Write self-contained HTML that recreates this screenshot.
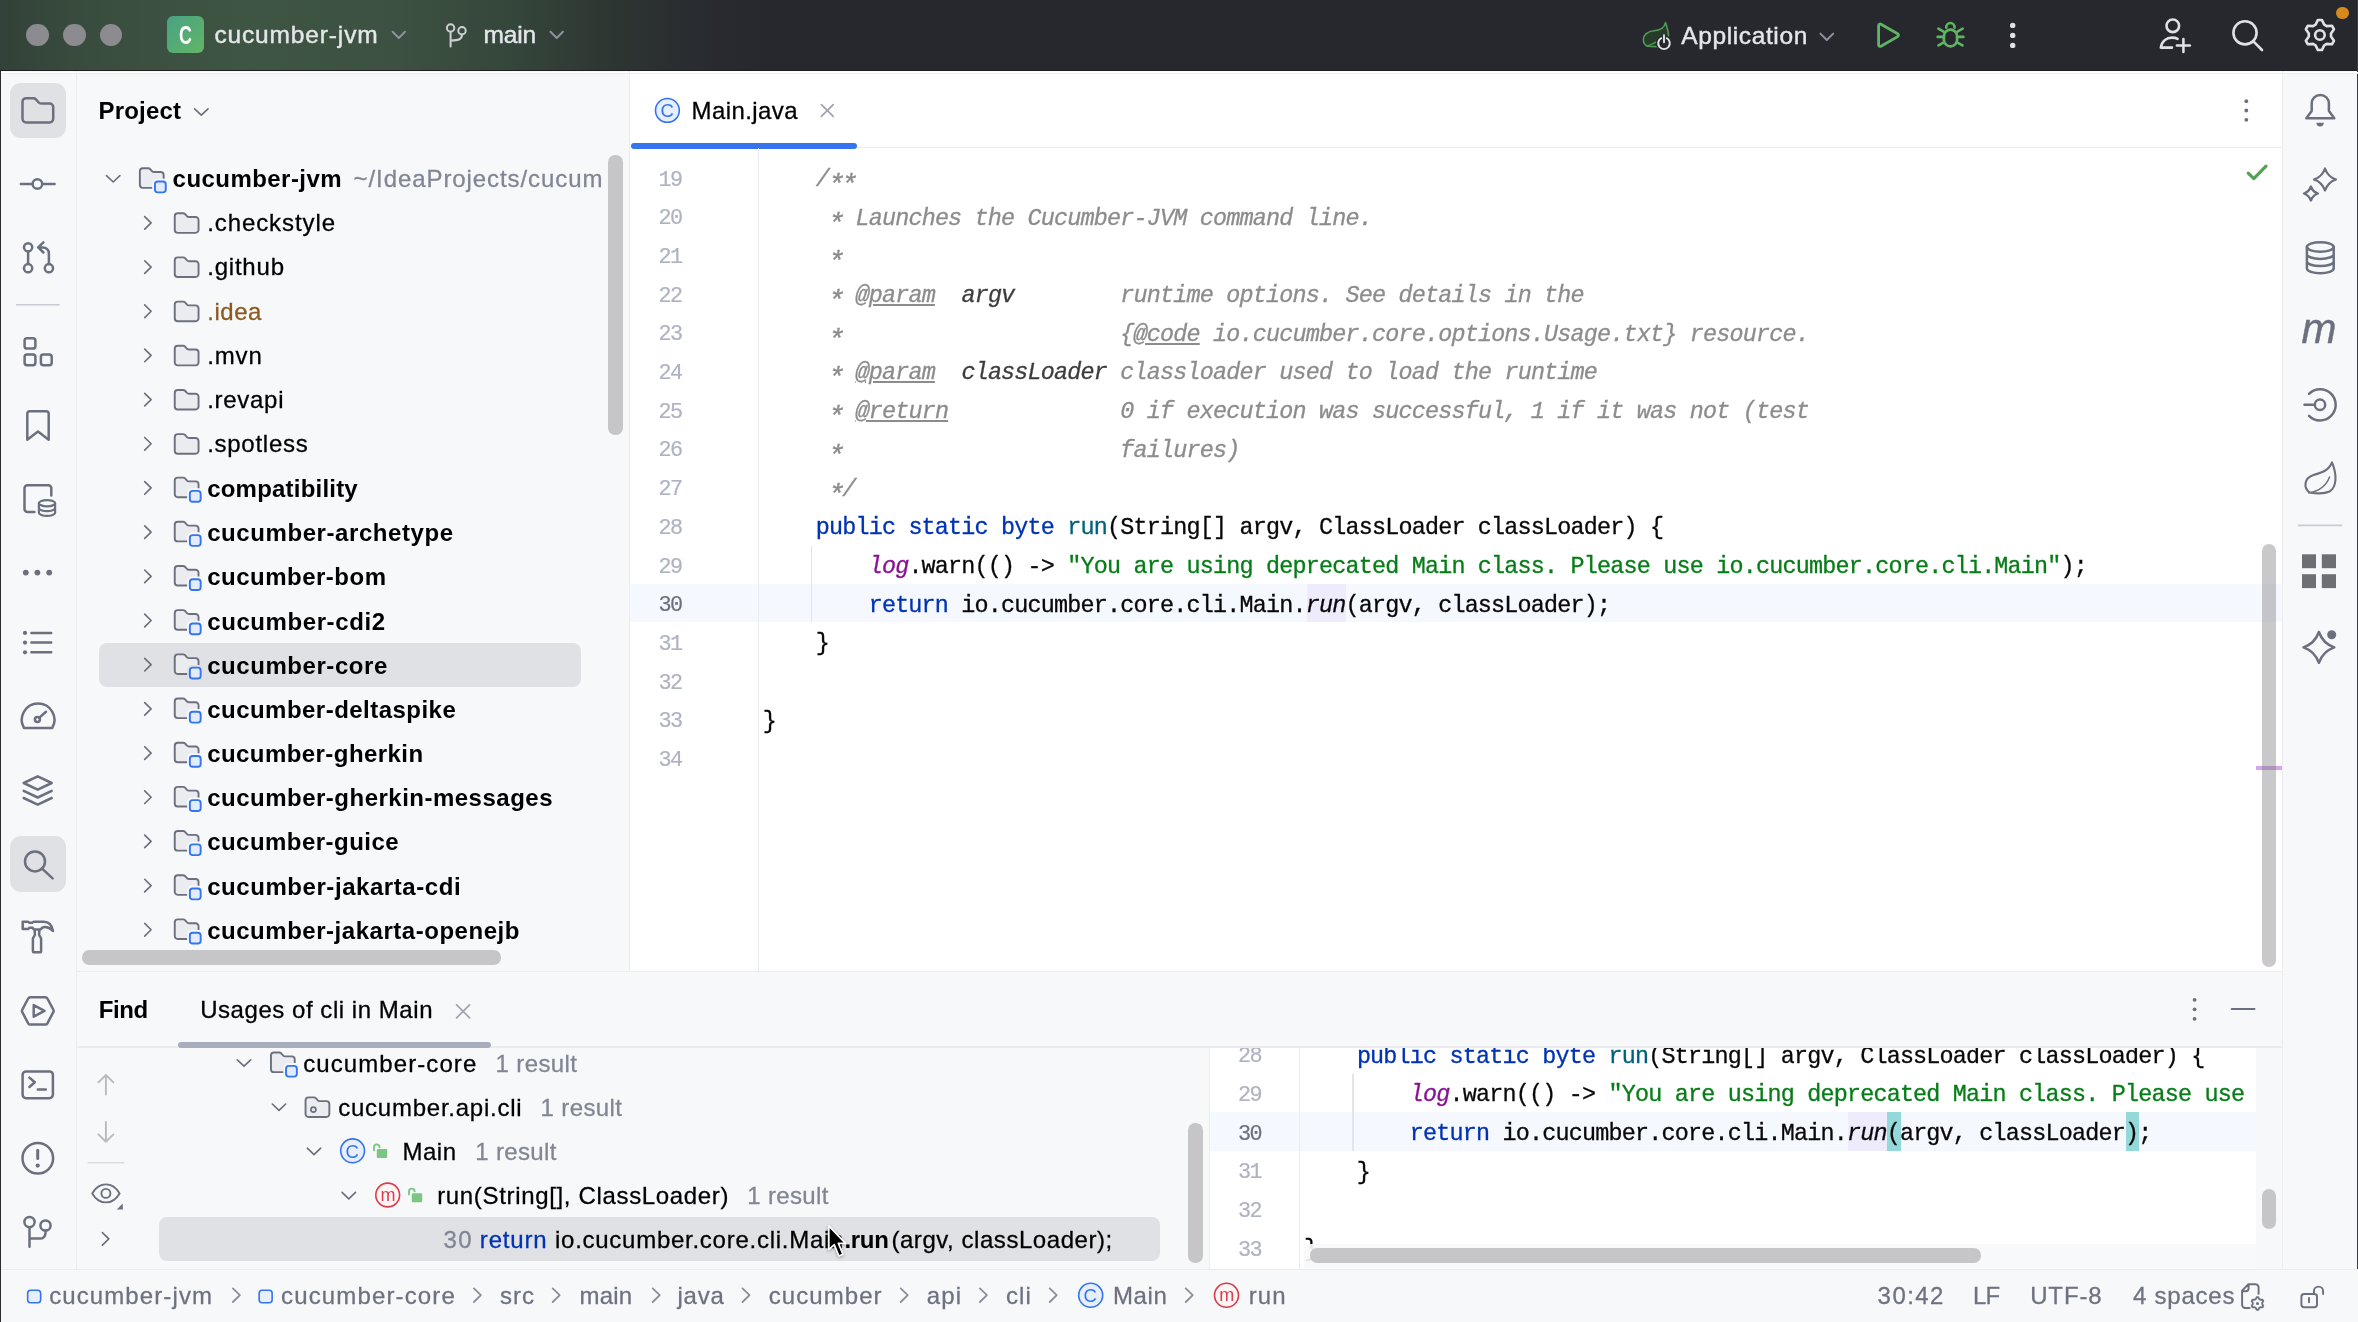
<!DOCTYPE html>
<html lang="en"><head><meta charset="utf-8"><title>cucumber-jvm – Main.java</title>
<style>
html,body{margin:0;padding:0;background:#F7F8FA;}
body{width:2358px;height:1322px;overflow:hidden;font-family:"Liberation Sans",sans-serif;-webkit-font-smoothing:antialiased;}
#app{will-change:transform;position:relative;width:2358px;height:1322px;overflow:hidden;background:#F7F8FA;}
.abs,.t,.ic,.bx{position:absolute;}
.t{white-space:pre;color:#000;font-family:"Liberation Sans",sans-serif;}
.t{-webkit-text-stroke:.28px;}
.b{font-weight:bold;-webkit-text-stroke:0;}
.ic{overflow:visible;display:block;}
.mono{font-family:"Liberation Mono",monospace;}
.g{color:#818594;}
.w{color:#DFE1E5;}
.sb{color:#6C707E;}
/* code colours */
.kw{color:#0033B3;}
.str{color:#067D17;}
.cm{color:#8C8C8C;font-style:italic;}
.tag{color:#8C8C8C;font-style:italic;text-decoration:underline;}
.pv{color:#3D3D3D;font-style:italic;}
.fn{color:#00627A;}
.sf{color:#871094;font-style:italic;}
.it{font-style:italic;}
.as{display:inline-block;transform:translateY(5.5px) scale(1.2);}
.ln{color:#AEB3C2;}
.lnc{color:#6C707E;}
.code{position:absolute;white-space:pre;font-family:"Liberation Mono",monospace;font-size:23.4px;letter-spacing:-0.793px;line-height:38.7px;height:38.7px;color:#080808;-webkit-text-stroke:.3px;}
.lnum{position:absolute;white-space:pre;font-family:"Liberation Mono",monospace;font-size:21.8px;letter-spacing:-1.5px;line-height:38.7px;height:38.7px;text-align:right;-webkit-text-stroke:.2px;}
.stroke{fill:none;stroke:#6C707E;stroke-width:2.5;stroke-linecap:round;stroke-linejoin:round;}
</style>
</head>
<body>
<div id="app">
<div class="bx" style="left:0;top:0;width:2358px;height:71px;background:#27282E;"></div>
<div class="bx" style="left:0;top:0;width:900px;height:70px;background:linear-gradient(90deg,#324139 0px,#394D3E 90px,#3F5543 250px,#3C5141 400px,#35463B 510px,#2D3632 610px,#292C30 690px,#27282E 760px);"></div>
<div class="bx" style="left:0;top:70px;width:2358px;height:1.500px;background:#1E1F22;"></div>
<div class="bx" style="left:26.400000000000002px;top:23.7px;width:22.4px;height:22.4px;border-radius:50%;background:#8B8B90;"></div>
<div class="bx" style="left:63.3px;top:23.7px;width:22.4px;height:22.4px;border-radius:50%;background:#8B8B90;"></div>
<div class="bx" style="left:100.1px;top:23.7px;width:22.4px;height:22.4px;border-radius:50%;background:#8B8B90;"></div>
<div class="bx" style="left:166.7px;top:16px;width:37px;height:37px;border-radius:6px;background:linear-gradient(135deg,#49A282 0%,#55AB74 50%,#63B565 100%);"></div>
<span class="t b" style="left:178.6px;top:20.16px;font-size:25.5px;line-height:30px;color:#fff;transform:scaleX(.70);transform-origin:0 0;">C</span>
<span class="t " style="left:214.4px;top:20.41px;font-size:24.5px;line-height:30px;color:#E4E6EA;-webkit-text-stroke:.45px;letter-spacing:0.860px;">cucumber-jvm</span>
<svg class="ic" style="left:388px;top:26px" width="22" height="18" viewBox="388 26 22 18" ><path d="M392.6 31.8l6.2 6.2 6.2-6.2" fill="none" stroke="#8E919E" stroke-width="2" stroke-linecap="round" stroke-linejoin="round"/></svg>
<svg class="ic" style="left:444px;top:20px" width="26" height="30" viewBox="444 20 26 30" ><g fill="none" stroke="#CED0D6" stroke-width="2" stroke-linecap="round" stroke-linejoin="round"><circle cx="450.6" cy="28" r="3.7"/><circle cx="462" cy="30.8" r="3.7"/><path d="M450.6 31.8V46.6M462 34.6c0 4.6-3 5.8-11.4 6"/></g></svg>
<span class="t " style="left:483.6px;top:20.41px;font-size:24.5px;line-height:30px;color:#E4E6EA;-webkit-text-stroke:.45px;letter-spacing:-0.203px;">main</span>
<svg class="ic" style="left:546px;top:26px" width="22" height="18" viewBox="546 26 22 18" ><path d="M550.5 31.8l6.2 6.2 6.2-6.2" fill="none" stroke="#8E919E" stroke-width="2" stroke-linecap="round" stroke-linejoin="round"/></svg>
<svg class="ic" style="left:1640px;top:18px" width="36" height="36" viewBox="1640 18 36 36" ><path d="M1665.500 22.600C1664.500 27.500 1660 30.300 1654 30.800C1647.500 31.300 1643.400 35 1643.400 39.500C1643.400 42.500 1645 45 1647.200 46.200L1658 46.800C1664 46 1668 41 1668.500 35.600C1668.300 31.500 1667 27 1665.500 22.600Z" fill="#263B2A" stroke="#509A56" stroke-width="1.600" stroke-linejoin="round"/><path d="M1647.200 46.200C1650.500 44.500 1653.500 43.300 1656.500 42" fill="none" stroke="#509A56" stroke-width="1.400" stroke-linecap="round"/>
<circle cx="1664" cy="43.300" r="8.200" fill="#27282E"/><path d="M1661.300 38.200a5.800 5.800 0 1 0 5.400 0M1664 35.200v7" fill="none" stroke="#E4E6EA" stroke-width="1.900" stroke-linecap="round"/></svg>
<span class="t " style="left:1681.2px;top:21.21px;font-size:24.5px;line-height:30px;color:#E4E6EA;-webkit-text-stroke:.45px;letter-spacing:0.624px;">Application</span>
<svg class="ic" style="left:1815px;top:28px" width="24" height="18" viewBox="1815 28 24 18" ><path d="M1820.4 33.6l6.4 6.4 6.4-6.4" fill="none" stroke="#8E919E" stroke-width="2" stroke-linecap="round" stroke-linejoin="round"/></svg>
<svg class="ic" style="left:1874px;top:20px" width="30" height="30" viewBox="1874 20 30 30" ><path d="M1878.6 25.6v19.2a1.6 1.6 0 0 0 2.4 1.4l16.6-9.6a1.6 1.6 0 0 0 0-2.8l-16.6-9.6a1.6 1.6 0 0 0-2.4 1.4z" fill="none" stroke="#5FB563" stroke-width="2.800" stroke-linejoin="round"/></svg>
<svg class="ic" style="left:1934px;top:18px" width="32" height="32" viewBox="1934 18 32 32" ><g fill="none" stroke="#5FB563" stroke-width="2.700" stroke-linecap="round" stroke-linejoin="round">
<path d="M1943.900 36.300a6.600 6.600 0 0 1 13.200 0v3.400a6.600 6.600 0 0 1-13.200 0z"/>
<path d="M1946.200 27.600a4.200 4.600 0 0 1 8.400 0"/>
<path d="M1943.600 31.600l-5.200-3M1943.900 36.900h-6.200M1943.900 42.400l-5.400 3M1957.400 31.600l5.200-3M1957.100 36.900h6.200M1957.100 42.400l5.400 3"/></g></svg>
<svg class="ic" style="left:2006px;top:20px" width="14" height="32" viewBox="2006 20 14 32" ><g fill="#DFE1E5"><circle cx="2012.7" cy="25.4" r="2.7"/><circle cx="2012.7" cy="35.4" r="2.7"/><circle cx="2012.7" cy="45.4" r="2.7"/></g></svg>
<svg class="ic" style="left:2156px;top:14px" width="40" height="42" viewBox="2156 14 40 42" ><g fill="none" stroke="#DFE1E5" stroke-width="2.6" stroke-linecap="round" stroke-linejoin="round">
<circle cx="2172.800" cy="25.800" r="6.300"/><path d="M2172 47.600h-11.200c1-6.400 5.600-10 11.400-10 2.200 0 4 .4 5.400 1.200"/><path d="M2183.400 39v13M2176.900 45.500h13"/></g></svg>
<svg class="ic" style="left:2228px;top:16px" width="38" height="40" viewBox="2228 16 38 40" ><g fill="none" stroke="#DFE1E5" stroke-width="2.6" stroke-linecap="round"><circle cx="2245" cy="32.800" r="11.600"/><path d="M2253.400 41.400l8.600 8.600"/></g></svg>
<svg class="ic" style="left:2300px;top:16px" width="40" height="40" viewBox="2300 16 40 40" ><g fill="none" stroke="#DFE1E5" stroke-width="2.6" stroke-linejoin="round"><path d="M2317.92 19.93L2321.88 19.93L2324.19 24.65L2326.72 26.11L2331.96 25.75L2333.94 29.18L2331.00 33.54L2331.00 36.46L2333.94 40.82L2331.96 44.25L2326.72 43.89L2324.19 45.35L2321.88 50.07L2317.92 50.07L2315.61 45.35L2313.08 43.89L2307.84 44.25L2305.86 40.82L2308.80 36.46L2308.80 33.54L2305.86 29.18L2307.84 25.75L2313.08 26.11L2315.61 24.65Z"/><circle cx="2319.9" cy="35.0" r="4.800"/></g></svg>
<div class="bx" style="left:2336px;top:6.600px;width:12.600px;height:12.600px;border-radius:50%;background:#D68A1C;"></div>
<div class="bx" style="left:0;top:71px;width:76px;height:1198px;background:#F7F8FA;border-right:1px solid #EBECF0;"></div>
<div class="bx" style="left:10px;top:82.500px;width:56px;height:55.500px;border-radius:11px;background:#DFE1E5;"></div>
<div class="bx" style="left:10px;top:836px;width:55.500px;height:55.500px;border-radius:11px;background:#DFE1E5;"></div>
<svg class="ic" style="left:0px;top:71px" width="76" height="1198" viewBox="0 71 76 1198" ><g style="stroke-width:2.500"><path class="stroke" d="M22.500 101.800a3.600 3.600 0 0 1 3.600-3.600h7.400a3 3 0 0 1 2.200 1l3 3.300a3 3 0 0 0 2.200 1h8.700a3.600 3.600 0 0 1 3.600 3.600v11.700a3.600 3.600 0 0 1-3.600 3.600h-23.500a3.600 3.600 0 0 1-3.600-3.600z" /><path class="stroke" d="M20.900 184h11.600M42.200 184h12.400" /><circle class="stroke" cx="37.400" cy="184" r="4.800"/><circle class="stroke" cx="28.100" cy="247.300" r="4.100"/><circle class="stroke" cx="28.100" cy="268.200" r="4.100"/><circle class="stroke" cx="48.900" cy="268.200" r="4.100"/><path class="stroke" d="M28.100 251.600v12.400M48.900 264v-10.600a6 6 0 0 0-6-6h-4.400M43.400 242.300l-5.200 5.100 5.200 5.100" /><path d="M16 304.700h43.600" stroke="#C9CCD6" stroke-width="1.600" fill="none"/><rect class="stroke" x="24.600" y="338.200" width="10.800" height="10.400" rx="2.400"/><rect class="stroke" x="24.600" y="354.600" width="10.800" height="10.600" rx="2.400"/><rect class="stroke" x="40.900" y="354.600" width="10.800" height="10.600" rx="2.400"/><path class="stroke" d="M27.300 413.800a2.600 2.600 0 0 1 2.600-2.600h16.200a2.600 2.600 0 0 1 2.600 2.600v26l-10.700-8.200-10.700 8.200z" /><path class="stroke" d="M34.400 511.900h-6.900a3 3 0 0 1-3-3v-20.600a3 3 0 0 1 3-3h20.800a3 3 0 0 1 3 3v7.300" /><ellipse class="stroke" cx="47" cy="503.200" rx="8.100" ry="3.100" style="stroke-width:2.200"/><path class="stroke" d="M38.900 503.200v9.600c0 1.700 3.600 3.100 8.100 3.100s8.100-1.400 8.100-3.100v-9.600M38.900 508c0 1.700 3.600 3.100 8.100 3.100s8.100-1.400 8.100-3.100" style="stroke-width:2.200"/><g fill="#6C707E"><circle cx="25.800" cy="572.600" r="2.900"/><circle cx="37.400" cy="572.600" r="2.900"/><circle cx="49.200" cy="572.600" r="2.900"/></g><g fill="#6C707E"><circle cx="25" cy="632.900" r="2.100"/><circle cx="25" cy="642.600" r="2.100"/><circle cx="25" cy="652.300" r="2.100"/></g><path class="stroke" d="M31.400 632.900h19.800M31.400 642.600h19.800M31.400 652.300h19.800" /><path class="stroke" d="M23.900 727.900a16.300 16.300 0 1 1 28.400 0z" /><circle class="stroke" cx="37.400" cy="719.600" r="2.500"/><path class="stroke" d="M39.400 717.600l6.600-5.800" /><path class="stroke" d="M37.700 776.300l14 6.700-14 6.700-14-6.700zM23.700 790.800l14 6.700 14-6.700M23.700 798l14 6.700 14-6.700" /><circle class="stroke" cx="35" cy="861.400" r="10"/><path class="stroke" d="M42.400 868.800l10.200 9.600" /><path class="stroke" d="M22.700 921.800H28l1.400.9h2.800l1.500-.9H43.800C48.800 921.800 52 925.600 53 930.900C50.600 928.400 48 927 44.900 927C43 927 41.600 927.800 40.600 929.400H33.800l-1.500-1.700h-2.800l-1.400 1.400H22.700ZM34.600 929.600l.3 4.900c0 1.600-2 2.600-2 4.600V951a1.300 1.300 0 0 0 1.300 1.300h5.600a1.300 1.300 0 0 0 1.300-1.300V939.100c0-2-2-3-2-4.600l.3-4.900" /><path class="stroke" d="M30.400 997.200h14.800a2.600 2.600 0 0 1 2.200 1.300l5.900 11.100a2.600 2.600 0 0 1 0 2.600l-5.900 11.100a2.600 2.600 0 0 1-2.200 1.300h-14.800a2.600 2.600 0 0 1-2.200-1.300l-5.900-11.100a2.600 2.600 0 0 1 0-2.600l5.900-11.100a2.600 2.600 0 0 1 2.200-1.300zM33.700 1005.100v11.600l10.800-5.800z" /><rect class="stroke" x="22.600" y="1071.400" width="30.300" height="26.800" rx="3.400"/><path class="stroke" d="M29.400 1077.600l5.400 4.700-5.400 4.700M37.800 1089.500h8" /><circle class="stroke" cx="37.800" cy="1158.200" r="15.300"/><path class="stroke" d="M37.700 1150.200v8.200" style="stroke-width:3"/><circle cx="37.700" cy="1165.600" r="2.100" fill="#6C707E"/><circle class="stroke" cx="29.500" cy="1222.100" r="5.100"/><circle class="stroke" cx="45.500" cy="1225.500" r="5.100"/><path class="stroke" d="M29.500 1227.400v19.400M45.500 1230.800v2.400a5.400 5.400 0 0 1-5.400 5.400h-10" /></g></svg>
<div class="bx" style="left:77px;top:71px;width:552px;height:900px;background:#F7F8FA;border-right:1px solid #EBECF0;overflow:hidden;"></div>
<span class="t b" style="left:98.6px;top:95.88px;font-size:24px;line-height:30px;letter-spacing:0.171px;">Project</span>
<div class="bx" style="left:98.500px;top:643.3px;width:482px;height:43.400px;border-radius:8px;background:#DFE1E5;"></div>
<span class="t b" style="left:172.6px;top:164.08px;font-size:24px;line-height:30px;letter-spacing:0.449px;">cucumber-jvm</span>
<span class="t g" style="left:353.6px;top:164.08px;font-size:24px;line-height:30px;letter-spacing:0.913px;">~/IdeaProjects/cucum</span>
<span class="t " style="left:207.2px;top:208.26px;font-size:24px;line-height:30px;color:#000;letter-spacing:0.908px;">.checkstyle</span>
<span class="t " style="left:207.2px;top:252.44px;font-size:24px;line-height:30px;color:#000;letter-spacing:0.790px;">.github</span>
<span class="t " style="left:207.2px;top:296.62px;font-size:24px;line-height:30px;color:#8C5A1E;letter-spacing:0.538px;">.idea</span>
<span class="t " style="left:207.2px;top:340.80px;font-size:24px;line-height:30px;color:#000;letter-spacing:0.861px;">.mvn</span>
<span class="t " style="left:207.2px;top:384.98px;font-size:24px;line-height:30px;color:#000;letter-spacing:0.709px;">.revapi</span>
<span class="t " style="left:207.2px;top:429.16px;font-size:24px;line-height:30px;color:#000;letter-spacing:0.723px;">.spotless</span>
<span class="t b" style="left:207.2px;top:474.04px;font-size:24px;line-height:30px;color:#000;letter-spacing:0.206px;">compatibility</span>
<span class="t b" style="left:207.2px;top:518.22px;font-size:24px;line-height:30px;color:#000;letter-spacing:0.577px;">cucumber-archetype</span>
<span class="t b" style="left:207.2px;top:562.40px;font-size:24px;line-height:30px;color:#000;letter-spacing:0.495px;">cucumber-bom</span>
<span class="t b" style="left:207.2px;top:606.58px;font-size:24px;line-height:30px;color:#000;letter-spacing:0.590px;">cucumber-cdi2</span>
<span class="t b" style="left:207.2px;top:650.76px;font-size:24px;line-height:30px;color:#000;letter-spacing:0.559px;">cucumber-core</span>
<span class="t b" style="left:207.2px;top:694.94px;font-size:24px;line-height:30px;color:#000;letter-spacing:0.473px;">cucumber-deltaspike</span>
<span class="t b" style="left:207.2px;top:739.12px;font-size:24px;line-height:30px;color:#000;letter-spacing:0.434px;">cucumber-gherkin</span>
<span class="t b" style="left:207.2px;top:783.30px;font-size:24px;line-height:30px;color:#000;letter-spacing:0.493px;">cucumber-gherkin-messages</span>
<span class="t b" style="left:207.2px;top:827.48px;font-size:24px;line-height:30px;color:#000;letter-spacing:0.462px;">cucumber-guice</span>
<span class="t b" style="left:207.2px;top:871.66px;font-size:24px;line-height:30px;color:#000;letter-spacing:0.560px;">cucumber-jakarta-cdi</span>
<span class="t b" style="left:207.2px;top:915.84px;font-size:24px;line-height:30px;color:#000;letter-spacing:0.526px;">cucumber-jakarta-openejb</span>
<svg class="ic" style="left:77px;top:71px" width="552" height="900" viewBox="77 71 552 900" ><path d="M194.60 108.80l6.700 6.400 6.700-6.400" fill="none" stroke="#6C707E" stroke-width="1.650" stroke-linecap="round" stroke-linejoin="round"/><path d="M106.50 175.60l6.700 6.400 6.700-6.400" fill="none" stroke="#6C707E" stroke-width="1.650" stroke-linecap="round" stroke-linejoin="round"/><path d="M139.85 171.25a3 3 0 0 1 3-3h5.400a2.600 2.600 0 0 1 1.900.8l2 2.200a2.600 2.600 0 0 0 1.900.8h6.600a3 3 0 0 1 3 3v9.800a3 3 0 0 1-3 3h-17.800a3 3 0 0 1-3-3z" fill="#EBECF0" stroke="#6C707E" stroke-width="1.9" stroke-linejoin="round"/><rect x="152.20" y="178.80" width="16.300" height="16.300" rx="4.400" fill="#F7F8FA"/><rect x="154.95" y="181.55" width="10.800" height="10.800" rx="2.800" fill="#E2ECFD" stroke="#3574F0" stroke-width="1.900"/><path d="M144.70 216.58l6.400 6.300-6.400 6.300" fill="none" stroke="#6C707E" stroke-width="1.650" stroke-linecap="round" stroke-linejoin="round"/><path d="M174.75 216.23a3 3 0 0 1 3-3h5.400a2.600 2.600 0 0 1 1.900.8l2 2.200a2.600 2.600 0 0 0 1.900.8h6.600a3 3 0 0 1 3 3v9.800a3 3 0 0 1-3 3h-17.800a3 3 0 0 1-3-3z" fill="#EBECF0" stroke="#6C707E" stroke-width="1.9" stroke-linejoin="round"/><path d="M144.70 260.76l6.400 6.300-6.400 6.300" fill="none" stroke="#6C707E" stroke-width="1.650" stroke-linecap="round" stroke-linejoin="round"/><path d="M174.75 260.41a3 3 0 0 1 3-3h5.400a2.600 2.600 0 0 1 1.900.8l2 2.200a2.600 2.600 0 0 0 1.900.8h6.600a3 3 0 0 1 3 3v9.800a3 3 0 0 1-3 3h-17.800a3 3 0 0 1-3-3z" fill="#EBECF0" stroke="#6C707E" stroke-width="1.9" stroke-linejoin="round"/><path d="M144.70 304.94l6.400 6.300-6.400 6.300" fill="none" stroke="#6C707E" stroke-width="1.650" stroke-linecap="round" stroke-linejoin="round"/><path d="M174.75 304.59a3 3 0 0 1 3-3h5.400a2.600 2.600 0 0 1 1.900.8l2 2.200a2.600 2.600 0 0 0 1.900.8h6.600a3 3 0 0 1 3 3v9.800a3 3 0 0 1-3 3h-17.800a3 3 0 0 1-3-3z" fill="#EBECF0" stroke="#6C707E" stroke-width="1.9" stroke-linejoin="round"/><path d="M144.70 349.12l6.400 6.300-6.400 6.300" fill="none" stroke="#6C707E" stroke-width="1.650" stroke-linecap="round" stroke-linejoin="round"/><path d="M174.75 348.77a3 3 0 0 1 3-3h5.400a2.600 2.600 0 0 1 1.900.8l2 2.200a2.600 2.600 0 0 0 1.900.8h6.600a3 3 0 0 1 3 3v9.800a3 3 0 0 1-3 3h-17.800a3 3 0 0 1-3-3z" fill="#EBECF0" stroke="#6C707E" stroke-width="1.9" stroke-linejoin="round"/><path d="M144.70 393.30l6.400 6.300-6.400 6.300" fill="none" stroke="#6C707E" stroke-width="1.650" stroke-linecap="round" stroke-linejoin="round"/><path d="M174.75 392.95a3 3 0 0 1 3-3h5.400a2.600 2.600 0 0 1 1.900.8l2 2.200a2.600 2.600 0 0 0 1.900.8h6.600a3 3 0 0 1 3 3v9.800a3 3 0 0 1-3 3h-17.800a3 3 0 0 1-3-3z" fill="#EBECF0" stroke="#6C707E" stroke-width="1.9" stroke-linejoin="round"/><path d="M144.70 437.48l6.400 6.300-6.400 6.300" fill="none" stroke="#6C707E" stroke-width="1.650" stroke-linecap="round" stroke-linejoin="round"/><path d="M174.75 437.13a3 3 0 0 1 3-3h5.400a2.600 2.600 0 0 1 1.900.8l2 2.200a2.600 2.600 0 0 0 1.900.8h6.600a3 3 0 0 1 3 3v9.800a3 3 0 0 1-3 3h-17.800a3 3 0 0 1-3-3z" fill="#EBECF0" stroke="#6C707E" stroke-width="1.9" stroke-linejoin="round"/><path d="M144.70 481.66l6.400 6.300-6.400 6.300" fill="none" stroke="#6C707E" stroke-width="1.650" stroke-linecap="round" stroke-linejoin="round"/><path d="M174.75 480.61a3 3 0 0 1 3-3h5.400a2.600 2.600 0 0 1 1.900.8l2 2.200a2.600 2.600 0 0 0 1.900.8h6.600a3 3 0 0 1 3 3v9.800a3 3 0 0 1-3 3h-17.800a3 3 0 0 1-3-3z" fill="#EBECF0" stroke="#6C707E" stroke-width="1.9" stroke-linejoin="round"/><rect x="187.10" y="488.16" width="16.300" height="16.300" rx="4.400" fill="#F7F8FA"/><rect x="189.85" y="490.91" width="10.800" height="10.800" rx="2.800" fill="#E2ECFD" stroke="#3574F0" stroke-width="1.900"/><path d="M144.70 525.84l6.400 6.300-6.400 6.300" fill="none" stroke="#6C707E" stroke-width="1.650" stroke-linecap="round" stroke-linejoin="round"/><path d="M174.75 524.79a3 3 0 0 1 3-3h5.400a2.600 2.600 0 0 1 1.900.8l2 2.200a2.600 2.600 0 0 0 1.900.8h6.600a3 3 0 0 1 3 3v9.800a3 3 0 0 1-3 3h-17.800a3 3 0 0 1-3-3z" fill="#EBECF0" stroke="#6C707E" stroke-width="1.9" stroke-linejoin="round"/><rect x="187.10" y="532.34" width="16.300" height="16.300" rx="4.400" fill="#F7F8FA"/><rect x="189.85" y="535.09" width="10.800" height="10.800" rx="2.800" fill="#E2ECFD" stroke="#3574F0" stroke-width="1.900"/><path d="M144.70 570.02l6.400 6.300-6.400 6.300" fill="none" stroke="#6C707E" stroke-width="1.650" stroke-linecap="round" stroke-linejoin="round"/><path d="M174.75 568.97a3 3 0 0 1 3-3h5.400a2.600 2.600 0 0 1 1.900.8l2 2.200a2.600 2.600 0 0 0 1.900.8h6.600a3 3 0 0 1 3 3v9.800a3 3 0 0 1-3 3h-17.800a3 3 0 0 1-3-3z" fill="#EBECF0" stroke="#6C707E" stroke-width="1.9" stroke-linejoin="round"/><rect x="187.10" y="576.52" width="16.300" height="16.300" rx="4.400" fill="#F7F8FA"/><rect x="189.85" y="579.27" width="10.800" height="10.800" rx="2.800" fill="#E2ECFD" stroke="#3574F0" stroke-width="1.900"/><path d="M144.70 614.20l6.400 6.300-6.400 6.300" fill="none" stroke="#6C707E" stroke-width="1.650" stroke-linecap="round" stroke-linejoin="round"/><path d="M174.75 613.15a3 3 0 0 1 3-3h5.400a2.600 2.600 0 0 1 1.900.8l2 2.200a2.600 2.600 0 0 0 1.900.8h6.600a3 3 0 0 1 3 3v9.800a3 3 0 0 1-3 3h-17.800a3 3 0 0 1-3-3z" fill="#EBECF0" stroke="#6C707E" stroke-width="1.9" stroke-linejoin="round"/><rect x="187.10" y="620.70" width="16.300" height="16.300" rx="4.400" fill="#F7F8FA"/><rect x="189.85" y="623.45" width="10.800" height="10.800" rx="2.800" fill="#E2ECFD" stroke="#3574F0" stroke-width="1.900"/><path d="M144.70 658.38l6.400 6.300-6.400 6.300" fill="none" stroke="#6C707E" stroke-width="1.650" stroke-linecap="round" stroke-linejoin="round"/><path d="M174.75 657.33a3 3 0 0 1 3-3h5.400a2.600 2.600 0 0 1 1.900.8l2 2.200a2.600 2.600 0 0 0 1.900.8h6.600a3 3 0 0 1 3 3v9.800a3 3 0 0 1-3 3h-17.800a3 3 0 0 1-3-3z" fill="#EBECF0" stroke="#6C707E" stroke-width="1.9" stroke-linejoin="round"/><rect x="187.10" y="664.88" width="16.300" height="16.300" rx="4.400" fill="#DFE1E5"/><rect x="189.85" y="667.63" width="10.800" height="10.800" rx="2.800" fill="#E2ECFD" stroke="#3574F0" stroke-width="1.900"/><path d="M144.70 702.56l6.400 6.300-6.400 6.300" fill="none" stroke="#6C707E" stroke-width="1.650" stroke-linecap="round" stroke-linejoin="round"/><path d="M174.75 701.51a3 3 0 0 1 3-3h5.400a2.600 2.600 0 0 1 1.900.8l2 2.200a2.600 2.600 0 0 0 1.900.8h6.600a3 3 0 0 1 3 3v9.800a3 3 0 0 1-3 3h-17.800a3 3 0 0 1-3-3z" fill="#EBECF0" stroke="#6C707E" stroke-width="1.9" stroke-linejoin="round"/><rect x="187.10" y="709.06" width="16.300" height="16.300" rx="4.400" fill="#F7F8FA"/><rect x="189.85" y="711.81" width="10.800" height="10.800" rx="2.800" fill="#E2ECFD" stroke="#3574F0" stroke-width="1.900"/><path d="M144.70 746.74l6.400 6.300-6.400 6.300" fill="none" stroke="#6C707E" stroke-width="1.650" stroke-linecap="round" stroke-linejoin="round"/><path d="M174.75 745.69a3 3 0 0 1 3-3h5.400a2.600 2.600 0 0 1 1.900.8l2 2.200a2.600 2.600 0 0 0 1.900.8h6.600a3 3 0 0 1 3 3v9.800a3 3 0 0 1-3 3h-17.800a3 3 0 0 1-3-3z" fill="#EBECF0" stroke="#6C707E" stroke-width="1.9" stroke-linejoin="round"/><rect x="187.10" y="753.24" width="16.300" height="16.300" rx="4.400" fill="#F7F8FA"/><rect x="189.85" y="755.99" width="10.800" height="10.800" rx="2.800" fill="#E2ECFD" stroke="#3574F0" stroke-width="1.900"/><path d="M144.70 790.92l6.400 6.300-6.400 6.300" fill="none" stroke="#6C707E" stroke-width="1.650" stroke-linecap="round" stroke-linejoin="round"/><path d="M174.75 789.87a3 3 0 0 1 3-3h5.400a2.600 2.600 0 0 1 1.900.8l2 2.200a2.600 2.600 0 0 0 1.900.8h6.600a3 3 0 0 1 3 3v9.800a3 3 0 0 1-3 3h-17.800a3 3 0 0 1-3-3z" fill="#EBECF0" stroke="#6C707E" stroke-width="1.9" stroke-linejoin="round"/><rect x="187.10" y="797.42" width="16.300" height="16.300" rx="4.400" fill="#F7F8FA"/><rect x="189.85" y="800.17" width="10.800" height="10.800" rx="2.800" fill="#E2ECFD" stroke="#3574F0" stroke-width="1.900"/><path d="M144.70 835.10l6.400 6.300-6.400 6.300" fill="none" stroke="#6C707E" stroke-width="1.650" stroke-linecap="round" stroke-linejoin="round"/><path d="M174.75 834.05a3 3 0 0 1 3-3h5.400a2.600 2.600 0 0 1 1.900.8l2 2.200a2.600 2.600 0 0 0 1.900.8h6.600a3 3 0 0 1 3 3v9.800a3 3 0 0 1-3 3h-17.800a3 3 0 0 1-3-3z" fill="#EBECF0" stroke="#6C707E" stroke-width="1.9" stroke-linejoin="round"/><rect x="187.10" y="841.60" width="16.300" height="16.300" rx="4.400" fill="#F7F8FA"/><rect x="189.85" y="844.35" width="10.800" height="10.800" rx="2.800" fill="#E2ECFD" stroke="#3574F0" stroke-width="1.900"/><path d="M144.70 879.28l6.400 6.300-6.400 6.300" fill="none" stroke="#6C707E" stroke-width="1.650" stroke-linecap="round" stroke-linejoin="round"/><path d="M174.75 878.23a3 3 0 0 1 3-3h5.400a2.600 2.600 0 0 1 1.900.8l2 2.200a2.600 2.600 0 0 0 1.900.8h6.600a3 3 0 0 1 3 3v9.800a3 3 0 0 1-3 3h-17.800a3 3 0 0 1-3-3z" fill="#EBECF0" stroke="#6C707E" stroke-width="1.9" stroke-linejoin="round"/><rect x="187.10" y="885.78" width="16.300" height="16.300" rx="4.400" fill="#F7F8FA"/><rect x="189.85" y="888.53" width="10.800" height="10.800" rx="2.800" fill="#E2ECFD" stroke="#3574F0" stroke-width="1.900"/><path d="M144.70 923.46l6.400 6.300-6.400 6.300" fill="none" stroke="#6C707E" stroke-width="1.650" stroke-linecap="round" stroke-linejoin="round"/><path d="M174.75 922.41a3 3 0 0 1 3-3h5.400a2.600 2.600 0 0 1 1.900.8l2 2.200a2.600 2.600 0 0 0 1.900.8h6.600a3 3 0 0 1 3 3v9.800a3 3 0 0 1-3 3h-17.800a3 3 0 0 1-3-3z" fill="#EBECF0" stroke="#6C707E" stroke-width="1.9" stroke-linejoin="round"/><rect x="187.10" y="929.96" width="16.300" height="16.300" rx="4.400" fill="#F7F8FA"/><rect x="189.85" y="932.71" width="10.800" height="10.800" rx="2.800" fill="#E2ECFD" stroke="#3574F0" stroke-width="1.900"/></svg>
<div class="bx" style="left:608.400px;top:154.600px;width:14.600px;height:280px;border-radius:7.200px;background:#C6C6C8;"></div>
<div class="bx" style="left:82.400px;top:950.300px;width:419px;height:14.300px;border-radius:7.200px;background:#C6C6C8;"></div>
<div class="bx" style="left:630px;top:71px;width:1652px;height:900px;background:#fff;"></div>
<div class="bx" style="left:630px;top:146.800px;width:1652px;height:1.600px;background:#EBECF0;"></div>
<svg class="ic" style="left:652px;top:96px" width="30" height="30" viewBox="652 96 30 30" ><circle cx="667.400" cy="110.400" r="11.900" fill="#E7EFFD" stroke="#3574F0" stroke-width="1.600"/></svg>
<span class="t " style="left:660.4px;top:95.79px;font-size:18.5px;line-height:30px;color:#3574F0;-webkit-text-stroke:0;">C</span>
<span class="t " style="left:691.6px;top:96.08px;font-size:24px;line-height:30px;letter-spacing:0.398px;">Main.java</span>
<svg class="ic" style="left:816px;top:100px" width="22" height="22" viewBox="816 100 22 22" ><path d="M821.400 104.600l11.800 11.800M833.200 104.600l-11.800 11.800" fill="none" stroke="#A0A3AF" stroke-width="1.700" stroke-linecap="round"/></svg>
<div class="bx" style="left:630.500px;top:143px;width:226.500px;height:6px;border-radius:3px;background:#3574F0;"></div>
<svg class="ic" style="left:2240px;top:96px" width="14" height="30" viewBox="2240 96 14 30" ><g fill="#6C707E"><circle cx="2246.300" cy="101.200" r="1.900"/><circle cx="2246.300" cy="110.500" r="1.900"/><circle cx="2246.300" cy="119.800" r="1.900"/></g></svg>
<div class="bx" style="left:630px;top:583.800px;width:1652px;height:38.400px;background:#F5F8FE;"></div>
<div class="bx" style="left:757.700px;top:148.400px;width:1.300px;height:822.600px;background:#EBECF0;"></div>
<div class="bx" style="left:1306.7px;top:584px;width:39.8px;height:38.200px;background:#EDEBFC;"></div>
<div class="bx" style="left:811.200px;top:545.600px;width:1.300px;height:76.600px;background:#E4E5EA;"></div>
<div class="lnum ln" style="left:658.4px;top:161.55px;">19</div>
<div class="code" style="left:762.7px;top:160.95px;">    <span class="cm">/<span class="as">*</span><span class="as">*</span></span></div>
<div class="lnum ln" style="left:658.4px;top:200.25px;">20</div>
<div class="code" style="left:762.7px;top:199.65px;">    <span class="cm"> <span class="as">*</span> Launches the Cucumber-JVM command line.</span></div>
<div class="lnum ln" style="left:658.4px;top:238.95px;">21</div>
<div class="code" style="left:762.7px;top:238.35px;">    <span class="cm"> <span class="as">*</span></span></div>
<div class="lnum ln" style="left:658.4px;top:277.65px;">22</div>
<div class="code" style="left:762.7px;top:277.05px;">    <span class="cm"> <span class="as">*</span> </span><span class="tag">@param</span><span class="cm">  </span><span class="pv">argv</span><span class="cm">        runtime options. See details in the</span></div>
<div class="lnum ln" style="left:658.4px;top:316.35px;">23</div>
<div class="code" style="left:762.7px;top:315.75px;">    <span class="cm"> <span class="as">*</span>                     {</span><span class="tag">@code</span><span class="cm"> io.cucumber.core.options.Usage.txt} resource.</span></div>
<div class="lnum ln" style="left:658.4px;top:355.05px;">24</div>
<div class="code" style="left:762.7px;top:354.45px;">    <span class="cm"> <span class="as">*</span> </span><span class="tag">@param</span><span class="cm">  </span><span class="pv">classLoader</span><span class="cm"> classloader used to load the runtime</span></div>
<div class="lnum ln" style="left:658.4px;top:393.75px;">25</div>
<div class="code" style="left:762.7px;top:393.15px;">    <span class="cm"> <span class="as">*</span> </span><span class="tag">@return</span><span class="cm">             0 if execution was successful, 1 if it was not (test</span></div>
<div class="lnum ln" style="left:658.4px;top:432.45px;">26</div>
<div class="code" style="left:762.7px;top:431.85px;">    <span class="cm"> <span class="as">*</span>                     failures)</span></div>
<div class="lnum ln" style="left:658.4px;top:471.15px;">27</div>
<div class="code" style="left:762.7px;top:470.55px;">    <span class="cm"> <span class="as">*</span>/</span></div>
<div class="lnum ln" style="left:658.4px;top:509.85px;">28</div>
<div class="code" style="left:762.7px;top:509.25px;">    <span class="kw">public static byte</span> <span class="fn">run</span>(String[] argv, ClassLoader classLoader) {</div>
<div class="lnum ln" style="left:658.4px;top:548.55px;">29</div>
<div class="code" style="left:762.7px;top:547.95px;">        <span class="sf">log</span>.warn(() -&gt; <span class="str">"You are using deprecated Main class. Please use io.cucumber.core.cli.Main"</span>);</div>
<div class="lnum lnc" style="left:658.4px;top:587.25px;">30</div>
<div class="code" style="left:762.7px;top:586.65px;">        <span class="kw">return</span> io.cucumber.core.cli.Main.<span class="it">run</span>(argv, classLoader);</div>
<div class="lnum ln" style="left:658.4px;top:625.95px;">31</div>
<div class="code" style="left:762.7px;top:625.35px;">    }</div>
<div class="lnum ln" style="left:658.4px;top:664.65px;">32</div>
<div class="lnum ln" style="left:658.4px;top:703.35px;">33</div>
<div class="code" style="left:762.7px;top:702.75px;">}</div>
<div class="lnum ln" style="left:658.4px;top:742.05px;">34</div>
<svg class="ic" style="left:2242px;top:160px" width="30" height="26" viewBox="2242 160 30 26" ><path d="M2248.200 173.200l5.600 5.400 12.200-12.400" fill="none" stroke="#4FA352" stroke-width="3.200" stroke-linecap="round" stroke-linejoin="round"/></svg>
<div class="bx" style="left:2256px;top:765.800px;width:25.500px;height:3.800px;background:#D4A6EA;"></div>
<div class="bx" style="left:2261.600px;top:543.500px;width:14.300px;height:423px;border-radius:7.200px;background:rgba(120,120,125,.40);"></div>
<div class="bx" style="left:2282px;top:71px;width:76px;height:1198px;background:#F7F8FA;border-left:1px solid #EBECF0;box-sizing:border-box;"></div>
<div class="bx" style="left:2357px;top:0;width:1px;height:1322px;background:#3A3B40;"></div>
<svg class="ic" style="left:2283px;top:71px" width="75" height="700" viewBox="2283 71 75 700" ><path class="stroke" d="M2306.300 118.200l5.400-7.200v-7.500a8.600 8.600 0 0 1 17.200 0v7.500l5.400 7.200z" /><path d="M2316.400 122.800h7.400a3.700 3.700 0 0 1-7.400 0z" fill="#6C707E"/><path class="stroke" d="M2325 168.5Q2327.8 176.7 2336 179.5Q2327.8 182.3 2325 190.5Q2322.2 182.3 2314 179.5Q2322.2 176.7 2325 168.5ZM2310.9 186.5Q2312.7000000000003 191.7 2317.9 193.5Q2312.7000000000003 195.3 2310.9 200.5Q2309.1 195.3 2303.9 193.5Q2309.1 191.7 2310.9 186.5Z" style="stroke-width:2.300"/><ellipse class="stroke" cx="2320.300" cy="247" rx="13.400" ry="4.700"/><path class="stroke" d="M2306.900 247v21.600c0 2.600 6 4.700 13.400 4.700s13.400-2.100 13.400-4.700v-21.600M2306.900 254.200c0 2.600 6 4.700 13.400 4.700s13.400-2.100 13.400-4.700M2306.900 261.400c0 2.600 6 4.700 13.400 4.700s13.400-2.100 13.400-4.700" /><path class="stroke" d="M2309 393.800a15.600 15.600 0 1 1 0 22" /><circle class="stroke" cx="2320" cy="404.800" r="5.200"/><path class="stroke" d="M2304.500 404.800h10.200" /><path class="stroke" d="M2332 462.400C2337.200 475 2336.800 487 2329.500 491.500C2323 494.600 2314 493.200 2309.500 492.500C2303.300 488 2304 478 2313 475.200C2322 472.500 2329 470.500 2332 462.400z" style="stroke-width:2.100"/><path class="stroke" d="M2308.600 492.800C2318 491.500 2326 486 2329.600 477" style="stroke-width:1.500"/><path d="M2298 525.400h44.200" stroke="#C9CCD6" stroke-width="1.600" fill="none"/><g fill="#6E6F72"><rect x="2302" y="554.300" width="14" height="13.900"/><rect x="2321.800" y="554.300" width="14.200" height="13.900"/><rect x="2302" y="574.200" width="14" height="13.900"/><rect x="2321.800" y="574.200" width="14.200" height="13.900"/></g><path class="stroke" d="M2318.9 632.0Q2322.9 643.4 2334.3 647.4Q2322.9 651.4 2318.9 662.8Q2314.9 651.4 2303.5 647.4Q2314.9 643.4 2318.9 632.0Z" /><circle cx="2331.700" cy="634.800" r="4.500" fill="#6C707E"/></svg>
<svg class="ic" style="left:2296px;top:310px" width="50" height="44" viewBox="2296 310 50 44" ><text x="2301.600" y="343.200" font-family="Liberation Sans, sans-serif" font-style="italic" font-size="43" textLength="35" lengthAdjust="spacingAndGlyphs" fill="#6C707E" stroke="#6C707E" stroke-width="0.400" stroke-linejoin="round">m</text></svg>
<div class="bx" style="left:77px;top:971px;width:2205px;height:298px;background:#F7F8FA;"></div>
<div class="bx" style="left:77px;top:970.500px;width:2205px;height:1.600px;background:#EBECF0;"></div>
<div class="bx" style="left:77px;top:1046px;width:2205px;height:1.600px;background:#EBECF0;"></div>
<span class="t b" style="left:98.8px;top:994.68px;font-size:24px;line-height:30px;letter-spacing:-0.419px;">Find</span>
<span class="t " style="left:200.2px;top:994.68px;font-size:24px;line-height:30px;letter-spacing:0.543px;">Usages of cli in Main</span>
<div class="bx" style="left:177.800px;top:1042px;width:313px;height:5.800px;border-radius:3px;background:#A8ADBD;"></div>
<div class="bx" style="left:159.200px;top:1216.900px;width:1001px;height:44.200px;border-radius:8px;background:#DFE1E5;"></div>
<div class="bx" style="left:1188.200px;top:1123px;width:14.400px;height:139.800px;border-radius:7.200px;background:#C6C6C8;"></div>
<div class="bx" style="left:1208.800px;top:1047.600px;width:1072.200px;height:221px;background:#fff;border-left:1px solid #EBECF0;overflow:hidden;">
<div class="bx" style="left:-1209.800px;top:-1047.600px;width:2358px;height:1322px;">
<div class="bx" style="left:1210px;top:1112.200px;width:1046px;height:38.600px;background:#F5F8FE;"></div>
<div class="bx" style="left:1299px;top:1047px;width:1.300px;height:222px;background:#EBECF0;"></div>
<div class="bx" style="left:1847.8px;top:1112.200px;width:39.8px;height:38.600px;background:#EDEBFC;"></div>
<div class="bx" style="left:1887.0px;top:1112.200px;width:13.7px;height:38.600px;background:#93D9D9;"></div>
<div class="bx" style="left:2125.5px;top:1112.200px;width:13.7px;height:38.600px;background:#93D9D9;"></div>
<div class="bx" style="left:1352.300px;top:1073.800px;width:1.300px;height:77px;background:#E4E5EA;"></div>
<div class="lnum ln" style="left:1238.0px;top:1038.35px;">28</div>
<div class="code" style="left:1303.8999999999999px;top:1037.75px;">    <span class="kw">public static byte</span> <span class="fn">run</span>(String[] argv, ClassLoader classLoader) {</div>
<div class="lnum ln" style="left:1238.0px;top:1077.05px;">29</div>
<div class="code" style="left:1303.8999999999999px;top:1076.45px;">        <span class="sf">log</span>.warn(() -&gt; <span class="str">"You are using deprecated Main class. Please use io.cucumber.core.cli.Main"</span>);</div>
<div class="lnum lnc" style="left:1238.0px;top:1115.75px;">30</div>
<div class="code" style="left:1303.8999999999999px;top:1115.15px;">        <span class="kw">return</span> io.cucumber.core.cli.Main.<span class="it">run</span>(argv, classLoader);</div>
<div class="lnum ln" style="left:1238.0px;top:1154.45px;">31</div>
<div class="code" style="left:1303.8999999999999px;top:1153.85px;">    }</div>
<div class="lnum ln" style="left:1238.0px;top:1193.15px;">32</div>
<div class="lnum ln" style="left:1238.0px;top:1231.85px;">33</div>
<div class="code" style="left:1303.8999999999999px;top:1231.25px;">}</div>
<div class="bx" style="left:2256px;top:1047px;width:26px;height:222px;background:#F7F8FA;"></div>
<div class="bx" style="left:1304px;top:1243.600px;width:952px;height:26px;background:rgba(247,248,250,.92);"></div>
<div class="bx" style="left:1309.800px;top:1248.400px;width:671.500px;height:14.400px;border-radius:7.200px;background:#C6C6C8;"></div>
<div class="bx" style="left:2261.600px;top:1189.300px;width:14.400px;height:40.200px;border-radius:7.200px;background:#C6C6C8;"></div>
</div></div>
<svg class="ic" style="left:77px;top:971px" width="2205" height="298" viewBox="77 971 2205 298" ><path d="M456.600 1004.800l13 13M469.600 1004.800l-13 13" fill="none" stroke="#A0A3AF" stroke-width="1.700" stroke-linecap="round"/><g fill="#6C707E"><circle cx="2194.600" cy="999.800" r="1.900"/><circle cx="2194.600" cy="1009.300" r="1.900"/><circle cx="2194.600" cy="1018.800" r="1.900"/></g><path d="M2231.600 1009h23" stroke="#6C707E" stroke-width="1.800" fill="none" stroke-linecap="round"/><g fill="none" stroke="#BABBC0" stroke-width="1.900" stroke-linecap="round" stroke-linejoin="round"><path d="M105.900 1094.600v-19.400M98.400 1082.400l7.500-7.400 7.500 7.400"/><path d="M105.900 1122v19.800M98.400 1134.400l7.500 7.400 7.500-7.400"/></g><path d="M87.600 1162.800h36.800" stroke="#DADCE2" stroke-width="1.600" fill="none"/><g fill="none" stroke="#6C707E" stroke-width="1.900" stroke-linejoin="round"><path d="M92.200 1193.400c3.400-5.800 8-9 13.700-9s10.300 3.200 13.700 9c-3.400 5.800-8 9-13.700 9s-10.300-3.200-13.700-9z"/><circle cx="105.900" cy="1193.400" r="4.500"/></g><path d="M122.800 1203.600v6h-6z" fill="#6C707E"/><path d="M102.40 1232.60l6.400 6.300-6.400 6.300" fill="none" stroke="#6C707E" stroke-width="1.650" stroke-linecap="round" stroke-linejoin="round"/><path d="M237.30 1059.80l6.700 6.400 6.700-6.400" fill="none" stroke="#6C707E" stroke-width="1.650" stroke-linecap="round" stroke-linejoin="round"/><path d="M270.95 1055.55a3 3 0 0 1 3-3h5.400a2.600 2.600 0 0 1 1.900.8l2 2.200a2.600 2.600 0 0 0 1.900.8h6.600a3 3 0 0 1 3 3v9.800a3 3 0 0 1-3 3h-17.800a3 3 0 0 1-3-3z" fill="#EBECF0" stroke="#6C707E" stroke-width="1.9" stroke-linejoin="round"/><rect x="283.30" y="1063.10" width="16.300" height="16.300" rx="4.400" fill="#F7F8FA"/><rect x="286.05" y="1065.85" width="10.800" height="10.800" rx="2.800" fill="#E2ECFD" stroke="#3574F0" stroke-width="1.900"/><path d="M272.30 1104.00l6.700 6.400 6.700-6.400" fill="none" stroke="#6C707E" stroke-width="1.650" stroke-linecap="round" stroke-linejoin="round"/><path d="M305.55 1100.35a3 3 0 0 1 3-3h5.400a2.600 2.600 0 0 1 1.900.8l2 2.200a2.600 2.600 0 0 0 1.900.8h6.600a3 3 0 0 1 3 3v9.800a3 3 0 0 1-3 3h-17.800a3 3 0 0 1-3-3z" fill="#EBECF0" stroke="#6C707E" stroke-width="1.9" stroke-linejoin="round"/><circle cx="313.400" cy="1109.600" r="2.500" fill="none" stroke="#6C707E" stroke-width="1.700"/><path d="M307.30 1148.20l6.700 6.400 6.700-6.400" fill="none" stroke="#6C707E" stroke-width="1.650" stroke-linecap="round" stroke-linejoin="round"/><circle cx="352.600" cy="1150.800" r="11.900" fill="#E7EFFD" stroke="#3574F0" stroke-width="1.600"/><path d="M374.0 1150.1999999999998v-3a2.800 2.800 0 0 1 5.600 0" fill="none" stroke="#7CC681" stroke-width="1.900" stroke-linecap="round"/><rect x="376.8" y="1149.0" width="10.400" height="9" rx="1" fill="#7CC681"/><path d="M342.10 1192.40l6.700 6.400 6.700-6.400" fill="none" stroke="#6C707E" stroke-width="1.650" stroke-linecap="round" stroke-linejoin="round"/><circle cx="387.700" cy="1195" r="11.900" fill="#FFF5F5" stroke="#DB3B4B" stroke-width="1.600"/><path d="M409.0 1194.3999999999999v-3a2.800 2.800 0 0 1 5.600 0" fill="none" stroke="#7CC681" stroke-width="1.900" stroke-linecap="round"/><rect x="411.8" y="1193.2" width="10.400" height="9" rx="1" fill="#7CC681"/></svg>
<span class="t " style="left:303.2px;top:1048.68px;font-size:24px;line-height:30px;letter-spacing:1.086px;">cucumber-core</span>
<span class="t g" style="left:495.6px;top:1048.68px;font-size:24px;line-height:30px;letter-spacing:0.357px;">1 result</span>
<span class="t " style="left:338.2px;top:1092.88px;font-size:24px;line-height:30px;letter-spacing:0.761px;">cucumber.api.cli</span>
<span class="t g" style="left:540.6px;top:1092.88px;font-size:24px;line-height:30px;letter-spacing:0.357px;">1 result</span>
<span class="t " style="left:345.6px;top:1136.79px;font-size:18.5px;line-height:30px;color:#3574F0;-webkit-text-stroke:0;">C</span>
<span class="t " style="left:402.6px;top:1137.08px;font-size:24px;line-height:30px;letter-spacing:0.456px;">Main</span>
<span class="t g" style="left:475.2px;top:1137.08px;font-size:24px;line-height:30px;letter-spacing:0.357px;">1 result</span>
<span class="t " style="left:380.5px;top:1179.96px;font-size:18px;line-height:30px;color:#DB3B4B;-webkit-text-stroke:0;">m</span>
<span class="t " style="left:437.2px;top:1181.28px;font-size:24px;line-height:30px;letter-spacing:0.661px;">run(String[], ClassLoader)</span>
<span class="t g" style="left:747.2px;top:1181.28px;font-size:24px;line-height:30px;letter-spacing:0.357px;">1 result</span>
<span class="t g" style="left:443.4px;top:1225.28px;font-size:24px;line-height:30px;letter-spacing:1.597px;">30</span>
<span class="t kw" style="left:479.8px;top:1225.28px;font-size:24px;line-height:30px;letter-spacing:0.839px;">return</span>
<span class="t " style="left:555px;top:1225.28px;font-size:24px;line-height:30px;letter-spacing:0.734px;">io.cucumber.core.cli.Main</span>
<span class="t b" style="left:844.4px;top:1225.28px;font-size:24px;line-height:30px;letter-spacing:-0.309px;">.run</span>
<span class="t " style="left:891.4px;top:1225.28px;font-size:24px;line-height:30px;letter-spacing:0.552px;">(argv, classLoader);</span>
<svg class="ic" style="left:826px;top:1224px" width="26" height="36" viewBox="826 1224 26 36" ><path d="M828.800 1225.800V1249.600L834.300 1244.700L838.900 1256L842.900 1254.300L838.400 1243.400H845.600Z" fill="#000" stroke="#fff" stroke-width="1.700" stroke-linejoin="round" style="filter:drop-shadow(0 1px 1.500px rgba(0,0,0,.35))"/></svg>
<div class="bx" style="left:0;top:1269px;width:2358px;height:53px;background:#F7F8FA;"></div>
<div class="bx" style="left:0;top:1268.600px;width:2358px;height:1.600px;background:#EBECF0;"></div>
<span class="t sb" style="left:49.2px;top:1280.88px;font-size:24px;line-height:30px;color:#6E7280;letter-spacing:1.100px;">cucumber-jvm</span>
<span class="t sb" style="left:281px;top:1280.88px;font-size:24px;line-height:30px;color:#6E7280;letter-spacing:1.145px;">cucumber-core</span>
<span class="t sb" style="left:500px;top:1280.88px;font-size:24px;line-height:30px;color:#6E7280;letter-spacing:1.000px;">src</span>
<span class="t sb" style="left:579.4px;top:1280.88px;font-size:24px;line-height:30px;color:#6E7280;letter-spacing:0.256px;">main</span>
<span class="t sb" style="left:677.4px;top:1280.88px;font-size:24px;line-height:30px;color:#6E7280;letter-spacing:0.790px;">java</span>
<span class="t sb" style="left:768.8px;top:1280.88px;font-size:24px;line-height:30px;color:#6E7280;letter-spacing:1.061px;">cucumber</span>
<span class="t sb" style="left:926.8px;top:1280.88px;font-size:24px;line-height:30px;color:#6E7280;letter-spacing:1.084px;">api</span>
<span class="t sb" style="left:1006px;top:1280.88px;font-size:24px;line-height:30px;color:#6E7280;letter-spacing:1.064px;">cli</span>
<span class="t sb" style="left:1113px;top:1280.88px;font-size:24px;line-height:30px;color:#6E7280;letter-spacing:0.590px;">Main</span>
<span class="t sb" style="left:1248.8px;top:1280.88px;font-size:24px;line-height:30px;color:#6E7280;letter-spacing:1.056px;">run</span>
<span class="t sb" style="left:1877.6px;top:1280.88px;font-size:24px;line-height:30px;color:#6E7280;letter-spacing:1.434px;">30:42</span>
<span class="t sb" style="left:1973px;top:1280.88px;font-size:24px;line-height:30px;color:#6E7280;letter-spacing:-0.816px;">LF</span>
<span class="t sb" style="left:2030.2px;top:1280.88px;font-size:24px;line-height:30px;color:#6E7280;letter-spacing:0.850px;">UTF-8</span>
<span class="t sb" style="left:2133px;top:1280.88px;font-size:24px;line-height:30px;color:#6E7280;letter-spacing:0.762px;">4 spaces</span>
<svg class="ic" style="left:0px;top:1270px" width="2358" height="52" viewBox="0 1270 2358 52" ><path d="M232.9 1288.400l7 6.800-7 6.800" fill="none" stroke="#8A8E9B" stroke-width="1.800" stroke-linecap="round" stroke-linejoin="round"/><path d="M473.9 1288.400l7 6.800-7 6.800" fill="none" stroke="#8A8E9B" stroke-width="1.800" stroke-linecap="round" stroke-linejoin="round"/><path d="M552.7 1288.400l7 6.800-7 6.800" fill="none" stroke="#8A8E9B" stroke-width="1.800" stroke-linecap="round" stroke-linejoin="round"/><path d="M652.7 1288.400l7 6.800-7 6.800" fill="none" stroke="#8A8E9B" stroke-width="1.800" stroke-linecap="round" stroke-linejoin="round"/><path d="M742.5 1288.400l7 6.800-7 6.800" fill="none" stroke="#8A8E9B" stroke-width="1.800" stroke-linecap="round" stroke-linejoin="round"/><path d="M900.7 1288.400l7 6.800-7 6.800" fill="none" stroke="#8A8E9B" stroke-width="1.800" stroke-linecap="round" stroke-linejoin="round"/><path d="M979.9 1288.400l7 6.800-7 6.800" fill="none" stroke="#8A8E9B" stroke-width="1.800" stroke-linecap="round" stroke-linejoin="round"/><path d="M1049.7 1288.400l7 6.800-7 6.800" fill="none" stroke="#8A8E9B" stroke-width="1.800" stroke-linecap="round" stroke-linejoin="round"/><path d="M1185.7 1288.400l7 6.800-7 6.800" fill="none" stroke="#8A8E9B" stroke-width="1.800" stroke-linecap="round" stroke-linejoin="round"/><rect x="27.65" y="1290.200" width="13" height="12.600" rx="3" fill="#E7EFFD" stroke="#3574F0" stroke-width="1.600"/><rect x="259.15" y="1290.200" width="13" height="12.600" rx="3" fill="#E7EFFD" stroke="#3574F0" stroke-width="1.600"/><circle cx="1090.700" cy="1295.300" r="12" fill="#E7EFFD" stroke="#3574F0" stroke-width="1.600"/><circle cx="1226.500" cy="1295.300" r="12" fill="#FFF5F5" stroke="#DB3B4B" stroke-width="1.600"/><path d="M2249.600 1308h-4.300a3.200 3.200 0 0 1-3.200-3.200V1290.600l6.300-6.300h7a3.200 3.200 0 0 1 3.200 3.200v6.200M2248.600 1284.400v3.800a3 3 0 0 1-3 3h-3.400" fill="none" stroke="#6C707E" stroke-width="1.950" stroke-linejoin="round" stroke-linecap="round"/><path d="M2256.68 1297.25L2258.32 1297.25L2259.30 1299.16L2260.36 1299.77L2262.50 1299.66L2263.32 1301.09L2262.16 1302.89L2262.16 1304.11L2263.32 1305.91L2262.50 1307.34L2260.36 1307.23L2259.30 1307.84L2258.32 1309.75L2256.68 1309.75L2255.70 1307.84L2254.64 1307.23L2252.50 1307.34L2251.68 1305.91L2252.84 1304.11L2252.84 1302.89L2251.68 1301.09L2252.50 1299.66L2254.64 1299.77L2255.70 1299.16Z" fill="#F7F8FA" stroke="#6C707E" stroke-width="1.800" stroke-linejoin="round"/><circle cx="2257.500" cy="1303.500" r="1.500" fill="#6C707E"/><rect x="2301.400" y="1294" width="15.600" height="13.200" rx="2.700" fill="none" stroke="#6C707E" stroke-width="1.950"/><path d="M2309 1298v4.200" stroke="#6C707E" stroke-width="1.950" stroke-linecap="round"/><path d="M2313.900 1293.400v-2.200a4.600 4.600 0 0 1 9.200 0v2.800" fill="none" stroke="#6C707E" stroke-width="1.950" stroke-linecap="round"/></svg>
<span class="t " style="left:1083.6px;top:1280.79px;font-size:18.5px;line-height:30px;color:#3574F0;-webkit-text-stroke:0;">C</span>
<span class="t " style="left:1219.2px;top:1279.56px;font-size:18px;line-height:30px;color:#DB3B4B;-webkit-text-stroke:0;">m</span>
<div class="bx" style="left:0;top:71.500px;width:2358px;height:1.500px;background:#fff;"></div>
<div class="bx" style="left:0;top:73px;width:2358px;height:1px;background:#EDEEF1;"></div>
<div class="bx" style="left:0;top:71px;width:1px;height:1251px;background:#2B2D30;"></div>
</div>
</body></html>
